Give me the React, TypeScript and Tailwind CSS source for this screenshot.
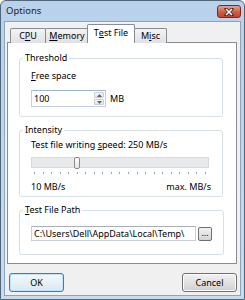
import React from 'react'

const tabs = [
  { pre: 'C', u: 'P', post: 'U', w: 'w-[36px]' },
  { pre: '', u: 'M', post: 'emory', w: 'w-[44px]' },
  { pre: 'T', u: 'e', post: 'st File', w: 'w-[48px]', active: true },
  { pre: 'M', u: 'i', post: 'sc', w: 'w-[33px]' },
]

function Group({ label, children }: { label: React.ReactNode; children: React.ReactNode }) {
  return (
    <fieldset className="border border-[#d5dfe5] rounded-[3px] px-[11px]">
      <legend className="-ml-[8px] px-[2px] leading-[12px]">{label}</legend>
      {children}
    </fieldset>
  )
}

export default function App() {
  const ticks = Array.from({ length: 21 })
  return (
    <div className="w-[245px] h-[300px] font-['Noto_Sans',sans-serif] text-[9px] text-black bg-white">
      <div className="h-full flex flex-col border border-[#526579] rounded-t-[6px] bg-gradient-to-b from-[#b9d1ea] to-[#c8dcf0] px-[3px] pb-[3px]">
        {/* Title bar */}
        <div className="h-[20px] flex items-center justify-between pl-[2px] pr-[0px]">
          <span className="text-[9.5px] text-[#1e1e1e]">Options</span>
          <div className="w-[24px] h-[13px] mt-[1px] rounded-[3px] border border-[#6d2f25] bg-gradient-to-b from-[#e8a493] via-[#d0604a] to-[#c0442d] flex items-center justify-center">
            <svg width="10" height="8" viewBox="0 0 10 8">
              <path d="M2 1 L8 7 M8 1 L2 7" stroke="#4a2018" strokeWidth="3" strokeLinecap="square" />
              <path d="M2 1 L8 7 M8 1 L2 7" stroke="#ffffff" strokeWidth="1.6" />
            </svg>
          </div>
        </div>

        {/* Client area */}
        <div className="flex-1 border border-[#8da4bd] bg-[#f0f0f0] flex flex-col pl-[1px] pt-[2px]">
          {/* Tabs */}
          <div className="flex items-end pl-[4px] h-[19px] relative z-10">
            {tabs.map((t, i) =>
              t.active ? (
                <div
                  key={i}
                  className={`${t.w} h-[19px] -mx-[1px] bg-white border border-b-0 border-[#898c95] rounded-t-[2px] flex items-center justify-center pb-[2px]`}
                >
                  {t.pre}
                  <span className="underline">{t.u}</span>
                  {t.post}
                </div>
              ) : (
                <div
                  key={i}
                  className={`${t.w} h-[15px] -mr-[1px] bg-gradient-to-b from-[#f3f3f3] to-[#e1e1e1] border border-b-0 border-[#898c95] rounded-t-[2px] flex items-center justify-center`}
                >
                  {t.pre}
                  <span className="underline">{t.u}</span>
                  {t.post}
                </div>
              )
            )}
          </div>

          {/* Panel */}
          <div className="w-[230px] h-[222px] ml-[1px] -mt-[1px] bg-white border border-[#898c95] pt-[9px] pl-[11px] pr-[13px] flex flex-col gap-[7px]">
            <Group label="Threshold">
              <div className="pt-[6px] pb-[9px] flex flex-col gap-[8px]">
                <div className="h-[12px] leading-[12px]">
                  <span className="underline">F</span>ree space
                </div>
                <div className="flex items-center gap-[4px]">
                  <div className="w-[75px] h-[17px] border border-[#c3d1e1] border-t-[#9fb3cb] flex bg-white">
                    <div className="flex-1 pl-[2px] leading-[15px]">100</div>
                    <div className="w-[12px] flex flex-col gap-[1px] p-[1px]">
                      <div className="flex-1 border border-[#c7ced6] bg-gradient-to-b from-[#f7f7f7] to-[#e3e6ea] rounded-[1px] flex items-center justify-center">
                        <svg width="5" height="3" viewBox="0 0 5 3"><path d="M0 3 L2.5 0 L5 3Z" fill="#5b6470" /></svg>
                      </div>
                      <div className="flex-1 border border-[#c7ced6] bg-gradient-to-b from-[#f7f7f7] to-[#e3e6ea] rounded-[1px] flex items-center justify-center">
                        <svg width="5" height="3" viewBox="0 0 5 3"><path d="M0 0 L2.5 3 L5 0Z" fill="#5b6470" /></svg>
                      </div>
                    </div>
                  </div>
                  <span>MB</span>
                </div>
              </div>
            </Group>

            <Group label="Intensity">
              <div className="pt-[3px] pb-[3px] flex flex-col">
                <div className="h-[12px] leading-[12px]">
                  Test file writing <span className="underline">s</span>peed: 250 MB/s
                </div>
                <div className="relative mt-[6px] h-[11px] w-[178px] bg-[#e7e9ea] border border-[#d8dadc]">
                  <div className="absolute left-[42px] -top-[1px] w-[6px] h-[12px] rounded-[2px] border border-[#8a8a8a] bg-gradient-to-b from-[#fdfdfd] to-[#e6e6e6]" />
                </div>
                <div className="flex justify-between w-[178px] px-[3px] mt-[4px]">
                  {ticks.map((_, i) => (
                    <div key={i} className="w-[1px] h-[2px] bg-[#a0a0a0]" />
                  ))}
                </div>
                <div className="flex justify-between w-[180px] mt-[7px] leading-[12px]">
                  <span>10 MB/s</span>
                  <span>max. MB/s</span>
                </div>
              </div>
            </Group>

            <Group label={<><span className="underline">T</span>est File Path</>}>
              <div className="pt-[10px] pb-[13px] flex items-center gap-[2px]">
                <div className="w-[165px] h-[15px] border border-[#c9ced6] border-t-[#a9afb8] bg-white pl-[2px] leading-[13px] whitespace-nowrap overflow-hidden">
                  C:\Users\Dell\AppData\Local\Temp\
                </div>
                <div className="w-[14px] h-[14px] rounded-[2px] border border-[#707070] bg-gradient-to-b from-[#f2f2f2] to-[#d4d4d4] flex items-center justify-center leading-none pb-[3px]">
                  ...
                </div>
              </div>
            </Group>
          </div>

          {/* Buttons */}
          <div className="flex justify-between pl-[3px] pr-[3px] mt-[9px]">
            <div className="w-[55px] h-[19px] rounded-[3px] border border-[#3c7fb1] bg-gradient-to-b from-[#f4f9fc] to-[#d9e8f2] shadow-[inset_0_0_0_1px_#bfe3f8] flex items-center justify-center">
              OK
            </div>
            <div className="w-[55px] h-[19px] rounded-[3px] border border-[#707070] bg-gradient-to-b from-[#f2f2f2] to-[#d0d0d0] shadow-[inset_0_0_0_1px_#fcfcfc] flex items-center justify-center">
              Cancel
            </div>
          </div>
        </div>
      </div>
    </div>
  )
}
